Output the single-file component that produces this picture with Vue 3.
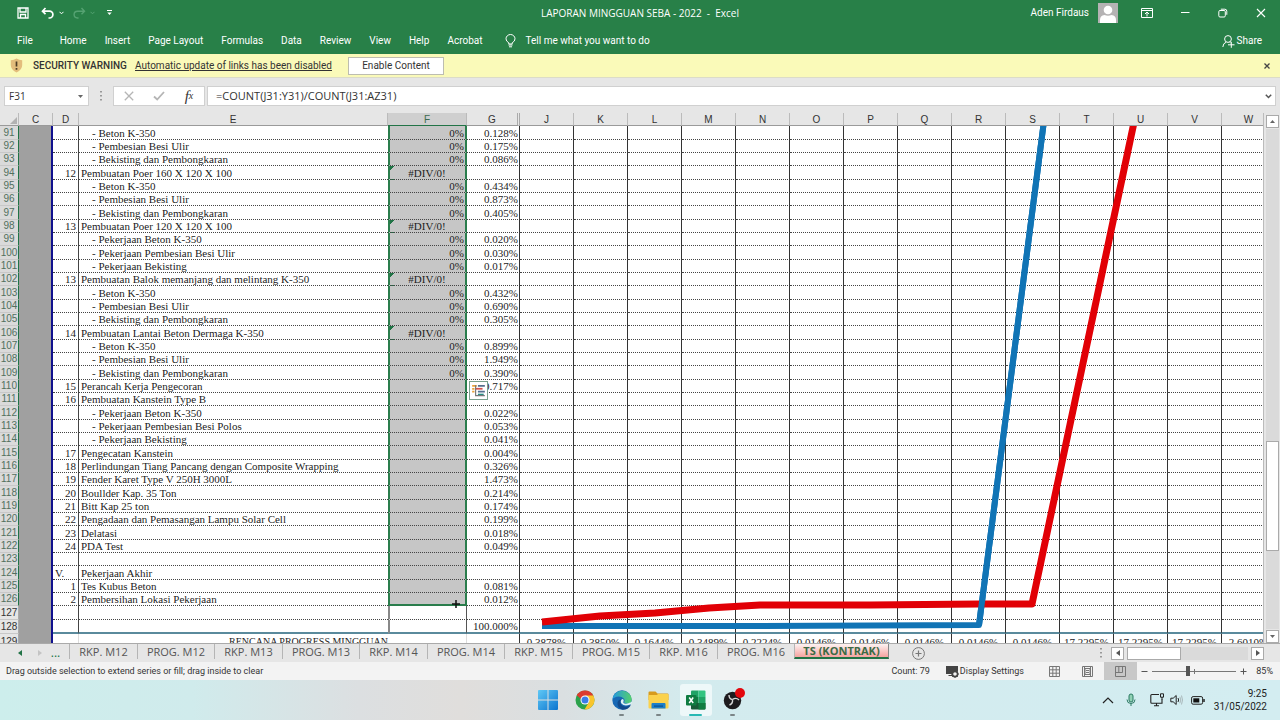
<script setup>
import { ref } from 'vue'

const menus = ['Home', 'Insert', 'Page Layout', 'Formulas', 'Data', 'Review', 'View', 'Help', 'Acrobat']
const sheets = ['RKP. M12', 'PROG. M12', 'RKP. M13', 'PROG. M13', 'RKP. M14', 'PROG. M14', 'RKP. M15', 'PROG. M15', 'RKP. M16', 'PROG. M16']
const weeks = ['J', 'K', 'L', 'M', 'N', 'O', 'P', 'Q', 'R', 'S', 'T', 'U', 'V', 'W']
const progress = ['0.3878%', '0.3850%', '0.1644%', '0.3489%', '0.2224%', '0.0146%', '0.0146%', '0.0146%', '0.0146%', '0.0146%', '17.2295%', '17.2295%', '17.2295%', '2.6010%']

const cellName = ref('F31')
const formula = ref('=COUNT(J31:Y31)/COUNT(J31:AZ31)')
const zoom = ref(85)

const DIV = '#DIV/0!'
const items = [
  ['', '- Beton K-350', '0%', '0.128%'],
  ['', '- Pembesian Besi Ulir', '0%', '0.175%'],
  ['', '- Bekisting dan Pembongkaran', '0%', '0.086%'],
  ['12', 'Pembuatan Poer 160 X 120 X 100', DIV, ''],
  ['', '- Beton K-350', '0%', '0.434%'],
  ['', '- Pembesian Besi Ulir', '0%', '0.873%'],
  ['', '- Bekisting dan Pembongkaran', '0%', '0.405%'],
  ['13', 'Pembuatan Poer 120 X 120 X 100', DIV, ''],
  ['', '- Pekerjaan Beton K-350', '0%', '0.020%'],
  ['', '- Pekerjaan Pembesian Besi Ulir', '0%', '0.030%'],
  ['', '- Pekerjaan Bekisting', '0%', '0.017%'],
  ['13', 'Pembuatan Balok memanjang dan melintang K-350', DIV, ''],
  ['', '- Beton K-350', '0%', '0.432%'],
  ['', '- Pembesian Besi Ulir', '0%', '0.690%'],
  ['', '- Bekisting dan Pembongkaran', '0%', '0.305%'],
  ['14', 'Pembuatan Lantai Beton Dermaga K-350', DIV, ''],
  ['', '- Beton K-350', '0%', '0.899%'],
  ['', '- Pembesian Besi Ulir', '0%', '1.949%'],
  ['', '- Bekisting dan Pembongkaran', '0%', '0.390%'],
  ['15', 'Perancah Kerja Pengecoran', '', '0.717%'],
  ['16', 'Pembuatan Kanstein Type B', '', ''],
  ['', '- Pekerjaan Beton K-350', '', '0.022%'],
  ['', '- Pekerjaan Pembesian Besi Polos', '', '0.053%'],
  ['', '- Pekerjaan Bekisting', '', '0.041%'],
  ['17', 'Pengecatan Kanstein', '', '0.004%'],
  ['18', 'Perlindungan Tiang Pancang dengan Composite Wrapping', '', '0.326%'],
  ['19', 'Fender Karet Type V 250H 3000L', '', '1.473%'],
  ['20', 'Boullder Kap. 35 Ton', '', '0.214%'],
  ['21', 'Bitt Kap 25 ton', '', '0.174%'],
  ['22', 'Pengadaan dan Pemasangan Lampu Solar Cell', '', '0.199%'],
  ['23', 'Delatasi', '', '0.018%'],
  ['24', 'PDA Test', '', '0.049%'],
  ['', '', '', ''],
  ['V.', 'Pekerjaan Akhir', '', ''],
  ['1', 'Tes Kubus Beton', '', '0.081%'],
  ['2', 'Pembersihan Lokasi Pekerjaan', '', '0.012%'],
  ['', '', '', ''],
  ['', '', '', '100.000%'],
]
const rows = items.map(([no, name, f, g], i) => ({ n: 91 + i, no, name, f, g, picked: i < 36 }))
</script>

<template>
  <div class="window">
    <header class="ribbon">
      <div class="titlebar">
        <div class="quick">
          <button aria-label="Save"><svg width="12" height="12" viewBox="0 0 12 12"><path d="M1 1h10v10H1z M3 1v4h6V1 M3.5 11V7.5h5V11" fill="none" stroke="#fff" stroke-width="1.3" /></svg></button>
          <button class="undo" aria-label="Undo"><svg width="14" height="13" viewBox="0 0 14 13"><path d="M4.5 1L1.5 4.2l3 3M2 4.2h6.5a3.4 3.4 0 0 1 0 6.8H7.5" fill="none" stroke="#fff" stroke-width="1.7" /></svg></button>
          <svg class="chev" width="5" height="4" viewBox="0 0 5 4"><path d="M.5 .8l2 2 2-2" fill="none" stroke="#fff" /></svg>
          <button class="redo" aria-label="Redo"><svg width="14" height="13" viewBox="0 0 14 13"><path d="M9.500 1l3 3.200-3 3M12 4.200H5.500a3.400 3.400 0 0 0 0 6.800h1" fill="none" stroke="#55a272" stroke-width="1.400" /></svg></button>
          <svg class="chev" width="5" height="4" viewBox="0 0 5 4"><path d="M.5 .8l2 2 2-2" fill="none" stroke="#55a272" /></svg>
          <button class="custom" aria-label="Customize"><svg width="5" height="6" viewBox="0 0 5 6"><path d="M0 .5h5" stroke="#fff" /><path d="M.3 2.500h4.400L2.500 5z" fill="#fff" /></svg></button>
        </div>
        <div class="title">LAPORAN MINGGUAN SEBA - 2022 &nbsp;-&nbsp; Excel</div>
        <div class="account">
          <span>Aden Firdaus</span>
          <svg class="avatar" width="20" height="20" viewBox="0 0 20 20"><path d="M0 0h20v20H0z" fill="#b5b3b4" /><circle cx="10" cy="7" r="4.300" fill="#fff" /><path d="M2 20v-3q0-4.500 4.500-5 3.500 1.600 7 0 4.500.5 4.500 5v3z" fill="#fff" /></svg>
          <button aria-label="Ribbon display options"><svg width="12" height="10" viewBox="0 0 12 10"><path d="M.5.5h11v9H.5zM.5 2.500h11M6 8.500V4.500M4 6l2-2 2 2" fill="none" stroke="#fff" /></svg></button>
          <button aria-label="Minimize"><svg width="10" height="10" viewBox="0 0 10 10"><path d="M1 4.500h8.500" stroke="#fff" /></svg></button>
          <button aria-label="Restore"><svg width="10" height="10" viewBox="0 0 10 10"><rect x=".8" y="2.500" width="6.500" height="6.500" rx="1.200" fill="none" stroke="#fff" /><path d="M2.800 1.200h4a2 2 0 0 1 2 2v3.600" fill="none" stroke="#fff" /></svg></button>
          <button aria-label="Close"><svg width="10" height="10" viewBox="0 0 10 10"><path d="M1 1l8 8M9 1l-8 8" stroke="#fff" stroke-width="1.100" /></svg></button>
        </div>
      </div>
      <nav class="menu">
        <a href="#" class="file">File</a>
        <a v-for="m in menus" :key="m" href="#">{{ m }}</a>
        <svg class="bulb" width="11" height="14" viewBox="0 0 11 14"><path d="M3.800 10V8.800Q1 7.300 1 4.800a4.400 4.200 0 0 1 9 0Q10 7.300 7.200 8.800V10z" fill="none" stroke="#fff" /><path d="M3.500 11h4M4 12.800h3" stroke="#fff" /></svg>
        <a href="#" class="tell">Tell me what you want to do</a>
        <button class="share"><svg width="13" height="13" viewBox="0 0 13 13"><circle cx="6" cy="4" r="3.400" fill="none" stroke="#fff" /><path d="M.8 12q.4-4 3.400-4.800M7.500 7l1.200 1M6 9.800h6.500M9.300 6.800v6" fill="none" stroke="#fff" /></svg>Share</button>
      </nav>
    </header>

    <div class="warning">
      <svg width="13" height="15" viewBox="0 0 13 15"><path d="M6.500.5Q9 2 12.200 2.200V7q0 5-5.700 7.500Q.8 12 .8 7V2.200Q4 2 6.500.5z" fill="#e3bd7c" /><path d="M6.500 3.500v5M6.500 10v1.700" stroke="#4d3c24" stroke-width="1.700" /></svg>
      <strong>SECURITY WARNING</strong>
      <a href="#">Automatic update of links has been disabled</a>
      <button class="enable">Enable Content</button>
      <button class="dismiss" aria-label="Close message"><svg width="6" height="6" viewBox="0 0 6 6"><path d="M.5.5l5 5M5.500.5l-5 5" stroke="#444" stroke-width="1.300" /></svg></button>
    </div>

    <div class="formula-row">
      <div class="name-box">
        <input v-model="cellName" aria-label="Name box" />
        <svg width="5" height="3" viewBox="0 0 5 3"><path d="M0 0h5L2.500 3z" fill="#666" /></svg>
      </div>
      <svg class="grip" width="2" height="10" viewBox="0 0 2 10"><path d="M1 0v10" stroke="#999" stroke-width="2" stroke-dasharray="1.500 2.500" /></svg>
      <div class="fx-box">
        <button aria-label="Cancel"><svg width="10" height="10" viewBox="0 0 10 10"><path d="M.8.8l8.400 8.400M9.200.8L.8 9.200" stroke="#b5b5b5" stroke-width="1.300" /></svg></button>
        <button aria-label="Enter"><svg width="12" height="10" viewBox="0 0 12 10"><path d="M1 5.500l3.200 3L11 1" fill="none" stroke="#b5b5b5" stroke-width="1.800" /></svg></button>
        <button class="fx" aria-label="Insert function">f<sub>x</sub></button>
      </div>
      <div class="formula-box">
        <input v-model="formula" aria-label="Formula bar" />
        <svg width="7" height="5" viewBox="0 0 7 5"><path d="M.8.8l2.700 2.700L6.200.8" fill="none" stroke="#555" stroke-width="1.500" /></svg>
      </div>
    </div>

    <main class="sheet">
      <div class="grid-view">
        <table>
          <colgroup>
            <col class="w-n" /><col class="w-c" /><col class="w-d" /><col class="w-e" /><col class="w-f" /><col class="w-g" />
            <col v-for="w in weeks" :key="w" class="w-week" />
          </colgroup>
          <thead>
            <tr>
              <th class="corner"><svg width="7" height="7" viewBox="0 0 7 7"><path d="M7 0v7H0z" fill="#b2b2b2" /></svg></th>
              <th>C</th><th>D</th><th>E</th><th class="on">F</th><th class="hid">G</th>
              <th v-for="w in weeks" :key="w">{{ w }}</th>
            </tr>
          </thead>
          <tbody>
            <tr v-for="r in rows" :key="r.n" :class="{ picked: r.picked, last: r.n === 128 }">
              <th>{{ r.n }}</th>
              <td class="c"></td>
              <td class="d" :class="{ part: r.no === 'V.' }">{{ r.no }}</td>
              <td class="e" :class="{ sub: r.name.startsWith('-') }">{{ r.name }}</td>
              <td class="f" :class="{ err: r.f === DIV, end: r.n === 126 }">{{ r.f }}</td>
              <td class="g">{{ r.g }}</td>
              <td v-for="w in weeks" :key="w" class="wk"></td>
            </tr>
            <tr class="total">
              <th>129</th>
              <td class="c"></td>
              <td class="d"></td>
              <td class="e">RENCANA PROGRESS MINGGUAN</td>
              <td class="f"></td>
              <td class="g"></td>
              <td v-for="(p, i) in progress" :key="i" class="wk">{{ p }}</td>
            </tr>
          </tbody>
        </table>
        <svg class="curve" width="1280" height="530" viewBox="0 113 1280 530">
          <g fill="none" stroke-linejoin="round">
            <path d="M542 626L760 626 979 625 1045 113" stroke="#1174b5" stroke-width="6" />
            <path d="M542 622Q570 619 600 616L655 613 709 608 760 605H870L979 604H1032L1136 113" stroke="#e10006" stroke-width="7" />
            <path d="M979 625L1045 113" stroke="#1174b5" stroke-width="6" />
          </g>
        </svg>
        <button class="analysis" aria-label="Quick analysis"><svg width="15" height="15" viewBox="0 0 13 13"><path d="M1 2.500h4M1 5h2M1 7.500h2" stroke="#eaa23a" stroke-width="1.500" /><path d="M6 2.500h6M6 7.500h6" stroke="#56708f" stroke-width="1.500" /><path d="M4 5h6" stroke="#d4504b" stroke-width="1.500" /><path d="M6 10h5" stroke="#2a8f86" stroke-width="1.500" /><path d="M4 2v9h8" fill="none" stroke="#777" /></svg></button>
        <svg class="cross" width="8" height="8" viewBox="0 0 8 8"><path d="M4 0v8M0 4h8" stroke="#111" stroke-width="1.500" /></svg>
      </div>
      <div class="vscroll">
        <button aria-label="Scroll up"><svg width="5" height="3" viewBox="0 0 5 3"><path d="M0 3h5L2.500 0z" fill="#666" /></svg></button>
        <div class="vtrack"><div class="vthumb"></div></div>
        <button aria-label="Scroll down"><svg width="5" height="3" viewBox="0 0 5 3"><path d="M0 0h5L2.500 3z" fill="#666" /></svg></button>
      </div>
    </main>

    <div class="tabs">
      <button class="prev" aria-label="Previous sheets"><svg width="4" height="6" viewBox="0 0 4 6"><path d="M4 0v6L0 3z" fill="#217346" /></svg></button>
      <button class="next" aria-label="Next sheets"><svg width="4" height="6" viewBox="0 0 4 6"><path d="M0 0v6l4-3z" fill="#c4c4c4" /></svg></button>
      <button class="more">...</button>
      <button v-for="(s, i) in sheets" :key="s" class="tab" :class="{ wide: i % 2 }">{{ s }}</button>
      <button class="tab active">TS (KONTRAK)</button>
      <button class="add" aria-label="New sheet"><svg width="13" height="13" viewBox="0 0 13 13"><circle cx="6.500" cy="6.500" r="5.900" fill="none" stroke="#777" /><path d="M6.500 3.500v6M3.500 6.500h6" stroke="#777" stroke-width="1.200" /></svg></button>
      <svg class="grip" width="2" height="10" viewBox="0 0 2 10"><path d="M1 0v10" stroke="#999" stroke-width="2" stroke-dasharray="1.500 2.500" /></svg>
      <div class="hscroll">
        <button aria-label="Scroll left"><svg width="4" height="6" viewBox="0 0 4 6"><path d="M4 0v6L0 3z" fill="#555" /></svg></button>
        <div class="htrack"><div class="hthumb"></div></div>
        <button aria-label="Scroll right"><svg width="4" height="6" viewBox="0 0 4 6"><path d="M0 0v6l4-3z" fill="#555" /></svg></button>
      </div>
    </div>

    <footer class="status">
      <span class="hint">Drag outside selection to extend series or fill; drag inside to clear</span>
      <span class="count">Count: 79</span>
      <button class="display"><svg width="13" height="13" viewBox="0 0 13 13"><path d="M0 1h12v5H7v3H0zM3 10h4v1H2z" fill="#444" /><circle cx="9" cy="9" r="2.600" fill="none" stroke="#444" stroke-width="1.600" /><path d="M9 5v1.500M9 11.500V13M5 9h1.500M11.500 9H13M6.200 6.200l1 1M10.800 10.800l1 1M11.800 6.200l-1 1M7.200 10.800l-1 1" stroke="#444" /></svg>Display Settings</button>
      <button class="view" aria-label="Normal"><svg width="11" height="11" viewBox="0 0 11 11"><path d="M.5.5h10v10H.5zM.5 3.800h10M.5 7.200h10M3.800.5v10M7.200.5v10" fill="none" stroke="#777" /></svg></button>
      <button class="view" aria-label="Page layout"><svg width="11" height="11" viewBox="0 0 11 11"><path d="M.5.5h10v10H.5zM2.500.5v10M8.500.5v10M3 2.500h5v6H3zM4 4.500h3M4 6.500h3" fill="none" stroke="#777" /></svg></button>
      <button class="view chosen" aria-label="Page break preview"><svg width="11" height="11" viewBox="0 0 11 11"><path d="M.5.5h10v10H.5zM.5 6.500h7v-6M3.800.5v6" fill="none" stroke="#777" /></svg></button>
      <div class="zoom">
        <button aria-label="Zoom out"><svg width="7" height="7" viewBox="0 0 7 7"><path d="M.5 3.500h6" stroke="#555" /></svg></button>
        <input v-model="zoom" type="range" min="0" max="200" aria-label="Zoom" />
        <button aria-label="Zoom in"><svg width="7" height="7" viewBox="0 0 7 7"><path d="M.5 3.500h6M3.500.5v6" stroke="#555" /></svg></button>
      </div>
      <span class="percent">{{ zoom }}%</span>
    </footer>

    <div class="taskbar">
      <div class="apps">
        <button aria-label="Start"><svg width="20" height="20" viewBox="0 0 20 20"><defs><linearGradient id="win" x1="0" y1="0" x2="1" y2="1"><stop offset="0" stop-color="#5fc8f5" /><stop offset="1" stop-color="#0b74cf" /></linearGradient></defs><path d="M1 0h8.500v9.500H0V1a1 1 0 0 1 1-1zM10.500 0H19a1 1 0 0 1 1 1v8.500h-9.500zM0 10.500h9.500V20H1a1 1 0 0 1-1-1zM10.500 10.500H20V19a1 1 0 0 1-1 1h-8.500z" fill="url(#win)" /></svg></button>
        <button aria-label="Chrome"><svg width="20" height="20" viewBox="0 0 20 20"><circle cx="10" cy="10" r="9.500" fill="#2ca24c" /><path d="M10 10L1.800 5.200A9.500 9.500 0 0 1 18.300 5.400z" fill="#dc3b30" /><path d="M10 5.500h8.300A9.500 9.500 0 0 1 9.500 19.500L14 12z" fill="#f9c52d" /><path d="M10 10L6 12.300 1.800 5.200z" fill="#2ca24c" /><path d="M1.800 5.200L4 3l6 2.500-4 3.500z" fill="#dc3b30" /><circle cx="10" cy="10" r="4.500" fill="#fff" /><circle cx="10" cy="10" r="3.500" fill="#3b7de8" /></svg></button>
        <button class="open" aria-label="Edge"><svg width="20" height="20" viewBox="0 0 20 20"><defs><linearGradient id="edge" x1="0" y1="0" x2="1" y2="0"><stop offset="0" stop-color="#2498df" /><stop offset="1" stop-color="#55d06c" /></linearGradient></defs><circle cx="10" cy="10" r="9.700" fill="#1768b4" /><path d="M.5 9A9.700 9.700 0 0 1 19.700 9q.2 4.500-4.200 4.600-3.500 0-3.300-1.700 1-1.500-.2-3.100Q9 5.500 4.500 6.800 1 8 .5 9z" fill="url(#edge)" /><path d="M9.500 9.500q-2.500 3 .5 6 4 2.500 8-.5l.7.500Q16 20 10.500 19.700 5 18 5.500 12.500 6.500 9 9.500 9.500z" fill="#114a8c" /><path d="M9.600 9.400q-1.500 2-.2 4.200 3 3.400 8.800 1l2-1.500v-1.500l-2 1q-2 1.300-4.800 1.100-2.700-.4-2-2 .8-1.500-.5-2.600z" fill="#dff2f4" /></svg></button>
        <button class="open" aria-label="File Explorer"><svg width="21" height="20" viewBox="0 0 21 20"><path d="M.5 2.500a1 1 0 0 1 1-1h6l2 2h10a1 1 0 0 1 1 1V10H.5z" fill="#d79b1e" /><path d="M.5 5h8.500l1-1h9.500a1 1 0 0 1 1 1v12.500a1 1 0 0 1-1 1h-18a1 1 0 0 1-1-1z" fill="#fbd24d" /><path d="M3.500 18.500v-4.500a1 1 0 0 1 1-1h12a1 1 0 0 1 1 1v4.500z" fill="#1d7fc9" /><path d="M6 15.500h9v1.200H6z" fill="#0b4f8d" /></svg></button>
        <button class="open current" aria-label="Excel"><svg width="20" height="20" viewBox="0 0 20 20"><path d="M6 .5h6.500V7H5V1.500a1 1 0 0 1 1-1z" fill="#21a366" /><path d="M12.500.5H18.500a1 1 0 0 1 1 1V7h-7z" fill="#33c481" /><path d="M5 7h7.500v6H5z" fill="#107c41" /><path d="M12.500 7h7v6h-7z" fill="#21a366" /><path d="M5 13h14.500v5.500a1 1 0 0 1-1 1H6a1 1 0 0 1-1-1z" fill="#185c37" /><path d="M12.500 13h7v5.500a1 1 0 0 1-1 1h-6z" fill="#107c41" /><rect x="0" y="5" width="10.500" height="10.500" rx="1" fill="#107c41" /><path d="M3.200 7.500l4 5.500M7.200 7.500l-4 5.500" stroke="#fff" stroke-width="1.500" /></svg></button>
        <button class="open" aria-label="OBS Studio"><svg width="24" height="24" viewBox="0 0 24 24"><circle cx="11.500" cy="12.500" r="8.700" fill="#1d1b1e" /><path d="M8 7q0 4 3.500 4.500M11.500 11.500q3.500-2.500 6.500.5M11.500 12q.5 3.500-3 5" fill="none" stroke="#d8d8d8" stroke-width="1.400" /><circle cx="19" cy="5" r="5" fill="#e3070d" /></svg></button>
      </div>
      <div class="tray">
        <button class="up" aria-label="Hidden icons"><svg width="12" height="7" viewBox="0 0 12 7"><path d="M1 6l5-5 5 5" fill="none" stroke="#222" stroke-width="1.200" /></svg></button>
        <button class="mic" aria-label="Microphone"><svg width="10" height="14" viewBox="0 0 10 14"><rect x="3" y="1" width="4" height="8" rx="2" fill="#8fd0b4" stroke="#2a7a62" /><path d="M1 6.500a4 4 0 0 0 8 0M5 10.500V13" fill="none" stroke="#2a7a62" /></svg></button>
        <button class="quickset" aria-label="Network, volume and battery">
          <svg width="14" height="14" viewBox="0 0 14 14"><path d="M9 1.500H1.800a1 1 0 0 0-1 1v6.700a1 1 0 0 0 1 1H12V6M4 12.800h5M6.500 10v3" fill="none" stroke="#222" stroke-width="1.100" /><path d="M10.500.8h3v3.400h-3zM12 4v2.500" fill="none" stroke="#222" /></svg>
          <svg width="13" height="12" viewBox="0 0 13 12"><path d="M.8 4.200h2.400l3-2.700v9l-3-2.700H.8z" fill="none" stroke="#222" /><path d="M8 4q1.300 2 0 4" fill="none" stroke="#222" /><path d="M9.800 2.800q2 3.200 0 6.400M11.500 1.500q2 4.500 0 9" fill="none" stroke="#aab8ba" /></svg>
          <svg width="14" height="9" viewBox="0 0 14 9"><rect x=".6" y=".6" width="11" height="7.600" rx="1.500" fill="none" stroke="#222" /><path d="M2.300 2.300h6v4.200h-6z" fill="#111" /><path d="M13 3v3" stroke="#222" stroke-width="1.500" /></svg>
        </button>
        <div class="clock"><span>9:25</span><span>31/05/2022</span></div>
      </div>
    </div>
  </div>
</template>

<style>
body {
  margin: 0;
}
</style>

<style scoped>
.window {
  display: flex;
  flex-direction: column;
  height: 100vh;
  overflow: hidden;
  background: #e6e6e6;
  color: #333;
  font-family: Roboto, "Noto Sans", sans-serif;
  font-size: 10px;
  line-height: 14px;
}
.window * {
  box-sizing: border-box;
}
button,
input {
  margin: 0;
  padding: 0;
  border: 0;
  background: none;
  color: inherit;
  font: inherit;
}
svg {
  display: block;
  flex: none;
}
button {
  display: flex;
  flex: none;
  align-items: center;
  justify-content: center;
}
a {
  color: inherit;
  text-decoration: none;
}
.ribbon {
  flex: none;
  height: 54px;
  background: #288048;
  color: #fff;
}
.titlebar {
  display: grid;
  grid-template-columns: 1fr auto 1fr;
  align-items: center;
  height: 26px;
}
.title {
  font-family: "Open Sans", "Noto Sans", sans-serif;
}
.quick {
  display: flex;
  align-items: center;
  padding-left: 17px;
}
.undo {
  margin-left: 12px;
}
.chev {
  margin-left: 4px;
}
.redo {
  margin-left: 8px;
}
.custom {
  margin-left: 12px;
}
.account {
  display: flex;
  align-items: center;
  justify-content: flex-end;
}
.avatar {
  margin: 0 10px 0 9px;
}
.account button {
  width: 38px;
  height: 26px;
}
.menu {
  display: flex;
  align-items: center;
  height: 28px;
  padding: 2px 18px 0 17px;
  gap: 18px;
}
.file {
  margin-right: 9px;
}
.bulb {
  margin-left: 4px;
}
.tell {
  margin-left: -8px;
}
.share {
  gap: 2px;
  margin-left: auto;
}
.warning {
  display: flex;
  flex: none;
  align-items: center;
  height: 24px;
  padding: 0 10px;
  border-bottom: 1px solid #dcdcc8;
  background: #fafab9;
}
.warning strong {
  width: 93px;
  margin: 0 9px 0 10px;
  font-weight: 500;
  white-space: nowrap;
}
.warning a {
  text-decoration: underline;
}
.enable {
  width: 96px;
  height: 18px;
  margin-left: 16px;
  border: 1px solid #bdbdb0;
  background: #fff;
}
.dismiss {
  margin-left: auto;
}
.formula-row {
  display: flex;
  flex: none;
  align-items: center;
  height: 35px;
  padding: 1px 4px 0;
}
.name-box,
.fx-box,
.formula-box {
  display: flex;
  align-items: center;
  height: 20px;
  border: 1px solid #d0d0d0;
  background: #fff;
  font-family: "Open Sans", "Noto Sans", sans-serif;
}
.name-box {
  width: 85px;
  padding: 0 5px 0 4px;
}
.name-box input,
.formula-box input {
  flex: 1;
  min-width: 0;
  outline: 0;
}
.grip {
  margin: 0 11px;
}
.fx-box {
  width: 92px;
  margin-right: 2px;
}
.fx-box button {
  flex: 1;
}
.fx-box .fx {
  font-family: "Liberation Serif", serif;
  font-size: 15px;
  font-style: italic;
}
.fx sub {
  font-size: 10px;
}
.formula-box {
  flex: 1;
  padding: 0 3px 0 8px;
  font-size: 11px;
}
.sheet {
  display: flex;
  flex: 1;
  min-height: 0;
}
.grid-view {
  position: relative;
  flex: 1;
  min-width: 0;
  overflow: hidden;
}
table {
  width: 1276px;
  border-spacing: 0;
  table-layout: fixed;
}
.w-n {
  width: 19px;
}
.w-c {
  width: 34px;
}
.w-d {
  width: 26px;
}
.w-e {
  width: 309px;
}
.w-f {
  width: 79px;
}
.w-g {
  width: 53px;
}
.w-week {
  width: 54px;
}
th,
td {
  padding: 0;
  overflow: hidden;
  font-weight: 400;
  line-height: 12px;
  white-space: nowrap;
}
thead th {
  height: 13px;
  padding-top: 2px;
  border-right: 1px solid #bbb;
  border-bottom: 1px solid #9a9a9a;
  background: #e6e6e6;
  color: #333;
  font-family: "Liberation Sans", Arial, sans-serif;
  font-size: 10px;
  line-height: 10px;
}
thead .on {
  border-bottom-color: #217346;
  background: #cfcfcf;
  color: #3b6b51;
}
thead .hid {
  border-right: 3px double #aaa;
}
.corner svg {
  margin: 0 1px 0 auto;
}
tbody th {
  border-right: 1px solid #aaa;
  border-bottom: 1px solid #c8c8c8;
  background: #e6e6e6;
  font-family: "Liberation Sans", Arial, sans-serif;
  font-size: 10px;
}
.picked th {
  border-right-color: #217346;
  background: #dadada;
  color: #51705e;
}
tbody tr {
  height: 13px;
}
tbody tr:nth-child(3n + 1) {
  height: 14px;
}
td {
  border-bottom: 1px dotted #444;
  background: #fff;
  color: #1c1c1c;
  font-family: "Liberation Serif", "Times New Roman", serif;
  font-size: 11px;
}
.c {
  border-right: 2px solid #11118e;
  border-bottom: 0;
  background: #a0a0a0;
}
.d {
  padding-right: 2px;
  border-right: 1px solid #444;
  text-align: right;
}
.part {
  padding-left: 2px;
  text-align: left;
}
.e {
  padding-left: 2px;
}
.sub {
  padding-left: 13px;
}
.f {
  border-right: 1px solid #555;
  border-left: 2px solid #888;
  text-align: right;
}
.picked .f {
  padding-right: 1px;
  border-right: 2px solid #2a7d4c;
  border-left: 2px solid #2a7d4c;
  background: #c6c6c6;
}
.picked .err {
  background: linear-gradient(135deg, #217346 3px, #c6c6c6 3px);
  text-align: center;
}
.picked .end {
  border-bottom: 2px solid #2a7d4c;
}
.g {
  padding-right: 1px;
  border-right: 1px solid #333;
  text-align: right;
}
.wk {
  border-right: 1px solid #333;
  text-align: center;
}
.last td:not(.c) {
  border-bottom: 2px solid #5a8a9c;
}
tbody .total {
  height: 16px;
}
.total .d,
.total .e,
.total .f {
  border-right-color: #ddd;
  border-left: 0;
  font-size: 10px;
  text-align: right;
}
.curve {
  position: absolute;
  top: 0;
  left: 0;
  clip-path: inset(13px 0 0 0);
}
.analysis {
  position: absolute;
  top: 268px;
  left: 469px;
  width: 19px;
  height: 19px;
  border: 1px solid #7aa08c;
  background: #fff;
}
.cross {
  position: absolute;
  top: 487px;
  left: 452px;
}
.vscroll {
  display: flex;
  flex-direction: column;
  gap: 1px;
  width: 17px;
  padding: 2px 2px 0;
  border-left: 1px solid #bbb;
}
.vscroll button,
.hscroll button {
  width: 13px;
  height: 13px;
  border: 1px solid #aaa;
  background: #fff;
}
.vtrack {
  display: flex;
  flex: 1;
  flex-direction: column;
  width: 13px;
  background: #dadada;
}
.vthumb {
  height: 22%;
  margin-top: auto;
  margin-bottom: 78px;
  border: 1px solid #aaa;
  background: #fff;
}
.tabs {
  display: flex;
  flex: none;
  align-items: center;
  height: 19px;
  padding-right: 16px;
  border-top: 1px solid #aaa;
  font-family: "Open Sans", "Noto Sans", sans-serif;
}
.prev {
  margin-left: 18px;
}
.next {
  margin-left: 16px;
}
.more {
  width: 27px;
  height: 15px;
  color: #217346;
  font-size: 12px;
}
.tab {
  width: 68px;
  height: 15px;
  margin-bottom: 3px;
  border-left: 1px solid #b5b5b5;
  color: #555;
  font-size: 11px;
}
.wide {
  width: 77px;
}
.active {
  width: 95px;
  border-right: 1px solid #888;
  border-bottom: 2px solid #217346;
  background: linear-gradient(#fdf3f2, #f5a3a0);
  color: #3d6b45;
  font-weight: 700;
}
.add {
  margin-left: 23px;
}
.tabs .grip {
  margin-right: 9px;
  margin-left: auto;
}
.hscroll {
  display: flex;
  gap: 3px;
  width: 153px;
}
.htrack {
  flex: 1;
  height: 13px;
  background: #dadada;
}
.hthumb {
  width: 54px;
  height: 13px;
  border: 1px solid #aaa;
  background: #fff;
}
.status {
  display: flex;
  flex: none;
  align-items: center;
  height: 18px;
  padding: 0 7px 0 6px;
  background: #f3f3f3;
  font-size: 9px;
}
.hint {
  margin-right: auto;
}
.count {
  margin-right: 16px;
}
.display {
  gap: 1px;
  margin-right: 14px;
}
.view {
  width: 33px;
  height: 18px;
}
.chosen {
  background: #c8c8c8;
}
.zoom {
  display: flex;
  align-items: center;
  margin-left: 4px;
}
.zoom input {
  width: 84px;
  height: 12px;
  margin: 0 4px;
  appearance: none;
  background: linear-gradient(#777, #777) center / 100% 1px no-repeat, linear-gradient(#777, #777) center / 1px 5px no-repeat;
}
.zoom input::-webkit-slider-thumb {
  width: 4px;
  height: 10px;
  appearance: none;
  background: #555;
}
.percent {
  width: 26px;
  text-align: right;
}
.taskbar {
  display: grid;
  flex: none;
  grid-template-columns: 1fr auto 1fr;
  align-items: center;
  height: 40px;
  background: linear-gradient(90deg, #cdeeec 0%, #d0ebec 15%, #dcdfe1 28%, #e0dedc 36%, #dadfe1 44%, #d3ebee 54%, #d3edf1 100%);
}
.apps {
  display: flex;
  grid-column: 2;
  gap: 5px;
}
.apps button {
  position: relative;
  width: 32px;
  height: 32px;
  border-radius: 3px;
}
.open::after {
  position: absolute;
  bottom: 0;
  width: 5px;
  height: 2px;
  border-radius: 1px;
  background: #7b8587;
  content: "";
}
.apps .current {
  background: #eef8f9;
}
.current::after {
  width: 13px;
  background: #28b8b4;
}
.tray {
  display: flex;
  align-items: center;
  justify-content: flex-end;
  padding-right: 13px;
  color: #222;
}
.mic {
  margin: 0 14px 0 12px;
}
.quickset {
  gap: 6px;
}
.quickset svg:last-child {
  margin-left: 2px;
}
.clock {
  display: flex;
  flex-direction: column;
  width: 62px;
  line-height: 13px;
  text-align: right;
}
</style>
